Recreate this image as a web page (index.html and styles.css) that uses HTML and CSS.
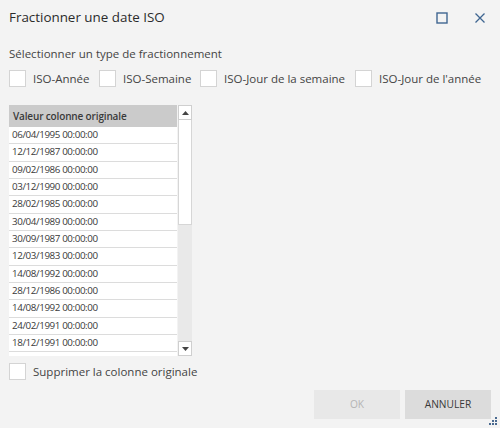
FILE: index.html
```html
<!DOCTYPE html>
<html lang="fr">
<head>
<meta charset="utf-8">
<title>Fractionner une date ISO</title>
<link rel="stylesheet" href="styles.css">
</head>
<body>
<div class="dialog">
  <div class="titlebar">
    <div class="title">Fractionner une date ISO</div>
    <div class="winbtns">
      <svg class="winicon" width="12" height="12" viewBox="0 0 12 12"><rect x="1" y="1" width="10" height="10" fill="none" stroke="#3f6591" stroke-width="1.4"/></svg>
      <svg class="winicon close" width="12" height="12" viewBox="0 0 12 12"><path d="M1.5 1.5 L10.5 10.5 M10.5 1.5 L1.5 10.5" stroke="#3f6591" stroke-width="1.3" fill="none"/></svg>
    </div>
  </div>
  <div class="section-label">Sélectionner un type de fractionnement</div>
  <div class="options">
    <label class="opt o1"><span class="box"></span><span>ISO-Année</span></label>
    <label class="opt o2"><span class="box"></span><span>ISO-Semaine</span></label>
    <label class="opt o3"><span class="box"></span><span>ISO-Jour de la semaine</span></label>
    <label class="opt o4"><span class="box"></span><span>ISO-Jour de l'année</span></label>
  </div>
  <div class="grid-wrap">
    <div class="grid">
      <div class="ghead">Valeur colonne originale</div>
      <div class="grow">06/04/1995 00:00:00</div>
      <div class="grow">12/12/1987 00:00:00</div>
      <div class="grow">09/02/1986 00:00:00</div>
      <div class="grow">03/12/1990 00:00:00</div>
      <div class="grow">28/02/1985 00:00:00</div>
      <div class="grow">30/04/1989 00:00:00</div>
      <div class="grow">30/09/1987 00:00:00</div>
      <div class="grow">12/03/1983 00:00:00</div>
      <div class="grow">14/08/1992 00:00:00</div>
      <div class="grow">28/12/1986 00:00:00</div>
      <div class="grow">14/08/1992 00:00:00</div>
      <div class="grow">24/02/1991 00:00:00</div>
      <div class="grow">18/12/1991 00:00:00</div>
      <div class="grow">30/09/1987 00:00:00</div>
    </div>
    <div class="scrollbar">
      <div class="sbtn"><svg width="7" height="4" viewBox="0 0 7 4"><path d="M0 4 L3.5 0 L7 4Z" fill="#444"/></svg></div>
      <div class="thumb"></div>
      <div class="track"></div>
      <div class="sbtn"><svg width="7" height="4" viewBox="0 0 7 4"><path d="M0 0 L3.5 4 L7 0Z" fill="#444"/></svg></div>
    </div>
  </div>
  <label class="opt remove"><span class="box"></span><span>Supprimer la colonne originale</span></label>
  <div class="footer">
    <div class="btn disabled">OK</div>
    <div class="btn">ANNULER</div>
  </div>
  <svg class="grip" width="8" height="8" viewBox="0 0 8 8">
    <rect x="6" y="0" width="2" height="2" fill="#4a6a90"/>
    <rect x="6" y="3" width="2" height="2" fill="#4a6a90"/>
    <rect x="3" y="3" width="2" height="2" fill="#4a6a90"/>
    <rect x="6" y="6" width="2" height="2" fill="#4a6a90"/>
    <rect x="3" y="6" width="2" height="2" fill="#4a6a90"/>
    <rect x="0" y="6" width="2" height="2" fill="#4a6a90"/>
  </svg>
</div>
</body>
</html>
```
FILE: styles.css
```css
* { box-sizing: border-box; }
html, body {
  margin: 0;
  padding: 0;
  background: #f3f3f3;
}
body {
  font-family: "Open Sans", "Noto Sans", sans-serif;
  color: #333;
}
.dialog {
  position: relative;
  width: 500px;
  height: 428px;
  padding: 0 9px;
  background: #f3f3f3;
  overflow: hidden;
}
.titlebar {
  display: flex;
  align-items: center;
  justify-content: space-between;
  height: 34px;
}
.title {
  font-size: 13.4px;
  color: #2b2b2b;
}
.winbtns {
  display: flex;
  align-items: center;
  gap: 26px;
  padding-right: 5px;
  padding-top: 2px;
}
.section-label {
  margin-top: 12px;
  font-size: 11.5px;
  color: #444;
  height: 16px;
  line-height: 16px;
}
.options {
  display: flex;
  align-items: center;
  margin-top: 8px;
  height: 17px;
}
.opt {
  display: flex;
  align-items: center;
  font-size: 11.5px;
  color: #444;
  white-space: nowrap;
}
.box {
  width: 17px;
  height: 17px;
  background: #fff;
  border: 1px solid #d4d4d4;
  margin-right: 7px;
  flex: none;
}
.o1 { width: 90px; }
.o2 { width: 101px; }
.o3 { width: 155px; }
.grid-wrap {
  display: flex;
  margin-top: 18px;
  height: 251px;
}
.grid {
  width: 168px;
  height: 251px;
  overflow: hidden;
  background: #fff;
}
.ghead {
  height: 22px;
  line-height: 22px;
  background: #cbcbcb;
  font-size: 10px;
  font-weight: 600;
  letter-spacing: -0.15px;
  color: #3a3a3a;
  padding-left: 4px;
}
.grow {
  height: 17.33px;
  line-height: 16px;
  border-bottom: 1px solid #dcdcdc;
  font-size: 9.8px;
  letter-spacing: -0.4px;
  color: #3a3a3a;
  padding-left: 3px;
  white-space: nowrap;
  overflow: hidden;
}
.scrollbar {
  width: 14px;
  margin-left: 1px;
  display: flex;
  flex-direction: column;
  background: #e9e9e9;
}
.sbtn {
  height: 15px;
  background: #fff;
  border: 1px solid #cfcfcf;
  display: flex;
  align-items: center;
  justify-content: center;
  flex: none;
}
.thumb {
  height: 105px;
  background: #fff;
  border: 1px solid #d6d6d6;
  border-top: none;
  flex: none;
}
.track {
  flex: 1;
}
.remove {
  margin-top: 7px;
}
.footer {
  display: flex;
  justify-content: flex-end;
  gap: 5px;
  margin-top: 10px;
}
.btn {
  width: 86px;
  height: 29px;
  line-height: 29px;
  text-align: center;
  background: #dcdcdc;
  font-size: 10.2px;
  color: #3a3a3a;
}
.btn.disabled {
  background: #e8e8e8;
  color: #b5b5b5;
}
.grip {
  position: absolute;
  right: 3px;
  bottom: 3px;
}
```
